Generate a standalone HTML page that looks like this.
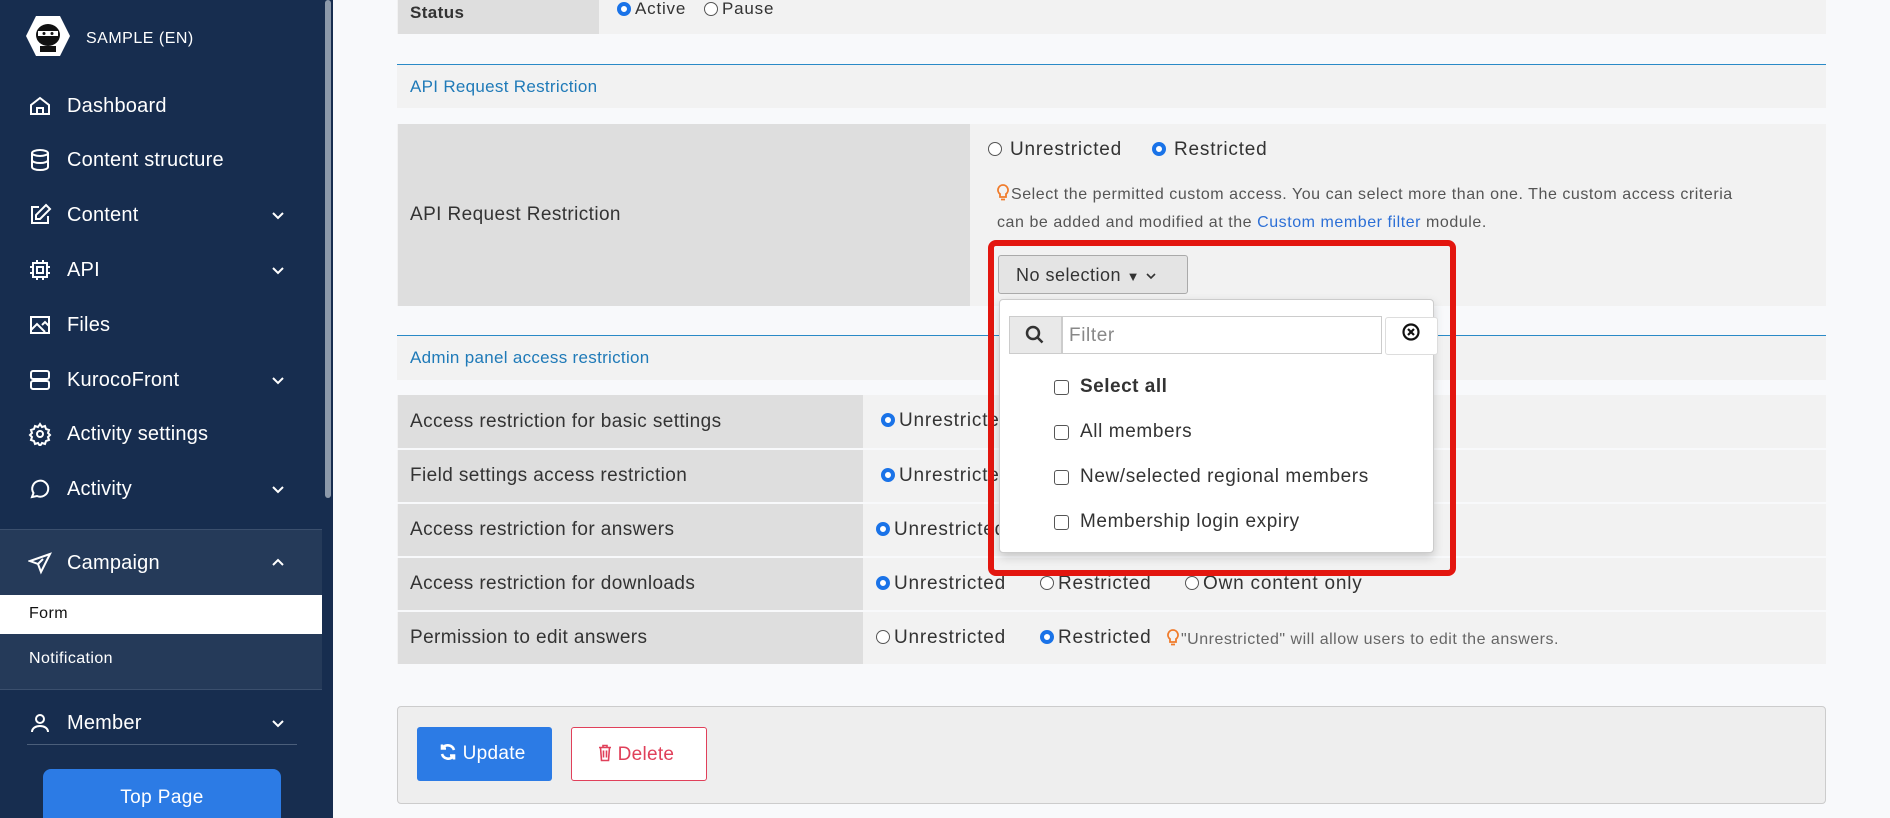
<!DOCTYPE html>
<html><head><meta charset="utf-8"><style>
*{box-sizing:border-box;margin:0;padding:0}
html,body{width:1890px;height:818px;overflow:hidden}
body{background:#f8f9fb;font-family:"Liberation Sans",sans-serif;color:#333;position:relative}
.abs{position:absolute}
#sb{left:0;top:0;width:333px;height:818px;background:#172d4f}
.mi{position:absolute;left:0;width:322px;height:40px;color:#fff;font-size:20px;display:flex;align-items:center;letter-spacing:.2px}
.mi .ic{position:absolute;left:28px;width:24px;height:24px}
.mi .tx{position:absolute;left:67px}
.mi .ch{position:absolute;left:271px;width:14px;height:14px}
.row{position:absolute;left:397px;width:1429px;background:#f2f2f2}
.row .l{position:absolute;left:1px;top:0;bottom:0;background:#dedede;display:flex;align-items:center;padding-left:12px;font-size:19px;letter-spacing:.4px;color:#333}
.rd{position:absolute;width:14px;height:14px;border-radius:50%;border:1px solid #555;background:#fff}
.rd.on{border:4px solid #1a73e8;background:#fff}
.t{position:absolute;font-size:19px;color:#333;white-space:nowrap;letter-spacing:.8px}
.cb{position:absolute;width:15px;height:15px;border:1.5px solid #555;border-radius:3px;background:#fff}
.bulb{display:inline-block;vertical-align:-2px;margin-right:2px}
</style></head><body>
<div id="sb" class="abs">
 <div class="abs" style="left:325px;top:0;width:6px;height:498px;background:#8c99aa;border-radius:3px"></div>
 <svg class="abs" style="left:26px;top:16px" width="44" height="40" viewBox="0 0 44 40"><polygon points="10,0 34,0 44,20 34,40 10,40 0,20" fill="#fff"/><ellipse cx="22" cy="19" rx="12" ry="11" fill="#111"/><rect x="12" y="15" width="20" height="5" fill="#fff"/><circle cx="18" cy="17.5" r="1.5" fill="#111"/><circle cx="26" cy="17.5" r="1.5" fill="#111"/><rect x="14" y="30" width="16" height="6" fill="#111"/></svg>
 <div class="abs" style="left:86px;top:30px;color:#fff;font-size:16px;letter-spacing:.5px">SAMPLE (EN)</div>
 <div class="mi" style="top:86px"><svg class="ic" viewBox="0 0 24 24" fill="none" stroke="#fff" stroke-width="2"><path d="M3 11L12 4l9 7v9H3z"/><path d="M9 20v-6h6v6"/></svg><span class="tx">Dashboard</span></div>
 <div class="mi" style="top:140px"><svg class="ic" viewBox="0 0 24 24" fill="none" stroke="#fff" stroke-width="2"><ellipse cx="12" cy="5" rx="8" ry="3"/><path d="M4 5v14c0 1.7 3.6 3 8 3s8-1.3 8-3V5M4 12c0 1.7 3.6 3 8 3s8-1.3 8-3"/></svg><span class="tx">Content structure</span></div>
 <div class="mi" style="top:195px"><svg class="ic" viewBox="0 0 24 24" fill="none" stroke="#fff" stroke-width="2"><path d="M11 4H4v16h16v-7"/><path d="M18 2l4 4-10 10H8v-4z"/></svg><span class="tx">Content</span><svg class="ch" viewBox="0 0 14 14" fill="none" stroke="#fff" stroke-width="2"><path d="M2 5l5 5 5-5"/></svg></div>
 <div class="mi" style="top:250px"><svg class="ic" viewBox="0 0 24 24" fill="none" stroke="#fff" stroke-width="2"><rect x="5" y="5" width="14" height="14"/><rect x="9" y="9" width="6" height="6"/><path d="M2 9h3M2 15h3M19 9h3M19 15h3M9 2v3M15 2v3M9 19v3M15 19v3"/></svg><span class="tx">API</span><svg class="ch" viewBox="0 0 14 14" fill="none" stroke="#fff" stroke-width="2"><path d="M2 5l5 5 5-5"/></svg></div>
 <div class="mi" style="top:305px"><svg class="ic" viewBox="0 0 24 24" fill="none" stroke="#fff" stroke-width="2"><rect x="3" y="4" width="18" height="16"/><path d="M3 17l6-6 8 8M14 12l3-3 4 4"/></svg><span class="tx">Files</span></div>
 <div class="mi" style="top:360px"><svg class="ic" viewBox="0 0 24 24" fill="none" stroke="#fff" stroke-width="2"><rect x="3" y="3" width="18" height="8" rx="2"/><rect x="3" y="13" width="18" height="8" rx="2"/></svg><span class="tx">KurocoFront</span><svg class="ch" viewBox="0 0 14 14" fill="none" stroke="#fff" stroke-width="2"><path d="M2 5l5 5 5-5"/></svg></div>
 <div class="mi" style="top:414px"><svg class="ic" viewBox="0 0 24 24" fill="none" stroke="#fff" stroke-width="2"><circle cx="12" cy="12" r="3"/><path d="M12 2l2 3 3-1 1 3 3 1-1 3 2 2-2 2 1 3-3 1-1 3-3-1-2 3-2-3-3 1-1-3-3-1 1-3-2-2 2-2-1-3 3-1 1-3 3 1z"/></svg><span class="tx">Activity settings</span></div>
 <div class="mi" style="top:469px"><svg class="ic" viewBox="0 0 24 24" fill="none" stroke="#fff" stroke-width="2"><path d="M4 20l1.5-4A8 8 0 1 1 9 19z"/></svg><span class="tx">Activity</span><svg class="ch" viewBox="0 0 14 14" fill="none" stroke="#fff" stroke-width="2"><path d="M2 5l5 5 5-5"/></svg></div>
 <div class="abs" style="left:0;top:529px;width:322px;height:161px;background:#253a59;border-top:1px solid #3b4f6d;border-bottom:1px solid #3b4f6d"></div>
 <div class="mi" style="top:543px"><svg class="ic" viewBox="0 0 24 24" fill="none" stroke="#fff" stroke-width="2"><path d="M22 3L2 10l8 3 3 8z"/><path d="M10 13l5-5"/></svg><span class="tx">Campaign</span><svg class="ch" viewBox="0 0 14 14" fill="none" stroke="#fff" stroke-width="2"><path d="M2 9l5-5 5 5"/></svg></div>
 <div class="abs" style="left:0;top:595px;width:322px;height:39px;background:#fff;color:#111;font-size:16px;padding:10px 0 0 29px;letter-spacing:.4px">Form</div>
 <div class="abs" style="left:29px;top:650px;color:#fff;font-size:16px;letter-spacing:.4px">Notification</div>
 <div class="mi" style="top:703px"><svg class="ic" viewBox="0 0 24 24" fill="none" stroke="#fff" stroke-width="2"><circle cx="12" cy="8" r="4"/><path d="M4 21c0-4 4-6 8-6s8 2 8 6"/></svg><span class="tx">Member</span><svg class="ch" viewBox="0 0 14 14" fill="none" stroke="#fff" stroke-width="2"><path d="M2 5l5 5 5-5"/></svg></div>
 <div class="abs" style="left:27px;top:744px;width:270px;height:1px;background:#4b5e7a"></div>
 <div class="abs" style="left:43px;top:769px;width:238px;height:60px;background:#2c7be5;border-radius:8px;color:#fff;font-size:19px;text-align:center;padding-top:18px;letter-spacing:.4px">Top Page</div>
</div>

<div class="row" style="top:0;height:34px"><div class="l" style="width:201px;padding-bottom:8px;font-weight:bold;font-size:17px">Status</div>
<div class="rd on" style="left:220px;top:2px"></div><div class="t" style="left:238px;top:-1px;font-size:17px">Active</div>
<div class="rd" style="left:307px;top:2px"></div><div class="t" style="left:325px;top:-1px;font-size:17px">Pause</div></div>

<div class="abs" style="left:397px;top:64px;width:1429px;height:44px;background:#f2f2f2;border-top:1px solid #2a8ac7"></div>
<div class="abs" style="left:410px;top:77px;color:#1f7ab8;font-size:17px;letter-spacing:.3px">API Request Restriction</div>

<div class="row" style="top:124px;height:182px"><div class="l" style="width:572px">API Request Restriction</div>
<div class="rd" style="left:591px;top:18px"></div><div class="t" style="left:613px;top:15px">Unrestricted</div>
<div class="rd on" style="left:755px;top:18px"></div><div class="t" style="left:777px;top:15px">Restricted</div>
<div class="t" style="left:600px;top:57px;font-size:16px;color:#555;line-height:28px;white-space:normal;width:745px;letter-spacing:.55px"><svg class="bulb" width="12" height="17" viewBox="0 0 12 17" fill="none" stroke="#f07c2c" stroke-width="1.8"><path d="M6 1a5 5 0 0 0-3 9v3h6v-3a5 5 0 0 0-3-9zM4 15.5h4"/></svg>Select the permitted custom access. You can select more than one. The custom access criteria can be added and modified at the <span style="color:#2c6fd6">Custom member filter</span> module.</div>
</div>

<div class="abs" style="left:397px;top:335px;width:1429px;height:45px;background:#f2f2f2;border-top:1px solid #2a8ac7"></div>
<div class="abs" style="left:410px;top:348px;color:#1f7ab8;font-size:17px;letter-spacing:.3px">Admin panel access restriction</div>

<div class="row" style="top:395px;height:53px"><div class="l" style="width:465px">Access restriction for basic settings</div><div class="rd on" style="left:484px;top:18px"></div><div class="t" style="left:502px;top:15px">Unrestricted</div></div>
<div class="row" style="top:450px;height:52px"><div class="l" style="width:465px">Field settings access restriction</div><div class="rd on" style="left:484px;top:18px"></div><div class="t" style="left:502px;top:15px">Unrestricted</div></div>
<div class="row" style="top:504px;height:52px"><div class="l" style="width:465px">Access restriction for answers</div><div class="rd on" style="left:479px;top:18px"></div><div class="t" style="left:497px;top:15px">Unrestricted</div></div>
<div class="row" style="top:558px;height:52px"><div class="l" style="width:465px">Access restriction for downloads</div><div class="rd on" style="left:479px;top:18px"></div><div class="t" style="left:497px;top:15px">Unrestricted</div><div class="rd" style="left:643px;top:18px"></div><div class="t" style="left:661px;top:15px">Restricted</div><div class="rd" style="left:788px;top:18px"></div><div class="t" style="left:806px;top:15px">Own content only</div></div>
<div class="row" style="top:612px;height:52px"><div class="l" style="width:465px">Permission to edit answers</div><div class="rd" style="left:479px;top:18px"></div><div class="t" style="left:497px;top:15px">Unrestricted</div><div class="rd on" style="left:643px;top:18px"></div><div class="t" style="left:661px;top:15px">Restricted</div><div class="t" style="left:770px;top:17px;font-size:16px;color:#666;letter-spacing:.5px"><svg class="bulb" width="12" height="17" viewBox="0 0 12 17" fill="none" stroke="#f07c2c" stroke-width="1.8"><path d="M6 1a5 5 0 0 0-3 9v3h6v-3a5 5 0 0 0-3-9zM4 15.5h4"/></svg>"Unrestricted" will allow users to edit the answers.</div></div>

<div class="abs" style="left:397px;top:706px;width:1429px;height:98px;background:#eee;border:1px solid #ccc;border-radius:4px"></div>
<div class="abs" style="left:417px;top:727px;width:135px;height:54px;background:#2c7be5;border-radius:3px;color:#fff;font-size:19px;padding:16px 0 0 22px;letter-spacing:.3px"><svg width="18" height="18" viewBox="0 0 18 18" fill="none" stroke="#fff" stroke-width="2.6" style="vertical-align:-2px"><path d="M15 7A6.5 6.5 0 0 0 3.5 5M3 11a6.5 6.5 0 0 0 11.5 2"/><path d="M3 1.5v4h4M15 16.5v-4h-4"/></svg> Update</div>
<div class="abs" style="left:571px;top:727px;width:136px;height:54px;background:#fff;border:1px solid #e0405a;border-radius:3px;color:#e0405a;font-size:19px;padding:16px 0 0 26px;letter-spacing:.3px"><svg width="14" height="18" viewBox="0 0 14 18" fill="none" stroke="#e0405a" stroke-width="1.6" style="vertical-align:-2px"><path d="M1 3.5h12M5 3.5V1.5h4v2M2.5 3.5l1 13h7l1-13M5.5 6.5v7M8.5 6.5v7"/></svg> Delete</div>

<div class="abs" style="left:988px;top:240px;width:468px;height:336px;border:6px solid #e3160f;border-radius:8px"></div>
<div class="abs" style="left:998px;top:255px;width:190px;height:39px;background:#e4e4e4;border:1px solid #aaa;border-radius:3px;font-size:18px;padding:9px 0 0 17px;letter-spacing:.5px">No selection <span style="font-size:13px">▼</span> <svg width="12" height="10" viewBox="0 0 12 10" fill="none" stroke="#333" stroke-width="1.6"><path d="M2 3l4 4 4-4"/></svg></div>
<div class="abs" style="left:999px;top:299px;width:435px;height:254px;background:#fff;border:1px solid #ccc;border-radius:4px;box-shadow:0 4px 10px rgba(0,0,0,.18)"></div>
<div class="abs" style="left:1009px;top:316px;width:53px;height:38px;background:#e9e9e9;border:1px solid #ccc"></div>
<svg class="abs" style="left:1025px;top:325px" width="20" height="20" viewBox="0 0 20 20" fill="none" stroke="#333" stroke-width="2.5"><circle cx="8" cy="8" r="6"/><path d="M12.5 12.5l5 5"/></svg>
<div class="abs" style="left:1062px;top:316px;width:320px;height:38px;border:1px solid #ccc;background:#fff;color:#888;font-size:19px;padding:8px 0 0 6px;letter-spacing:.6px">Filter</div>
<div class="abs" style="left:1385px;top:317px;width:53px;height:38px;border:1px solid #ddd;background:#fff;border-radius:3px"></div>
<svg class="abs" style="left:1401px;top:322px" width="20" height="20" viewBox="0 0 20 20" fill="none" stroke="#111" stroke-width="2.2"><circle cx="10" cy="10" r="7.5"/><path d="M7 7l6 6M13 7l-6 6"/></svg>
<div class="cb" style="left:1054px;top:380px"></div><div class="t" style="left:1080px;top:376px;font-weight:bold;letter-spacing:.5px">Select all</div>
<div class="cb" style="left:1054px;top:425px"></div><div class="t" style="left:1080px;top:421px;letter-spacing:.6px">All members</div>
<div class="cb" style="left:1054px;top:470px"></div><div class="t" style="left:1080px;top:466px;letter-spacing:.6px">New/selected regional members</div>
<div class="cb" style="left:1054px;top:515px"></div><div class="t" style="left:1080px;top:511px;letter-spacing:.6px">Membership login expiry</div>
</body></html>
